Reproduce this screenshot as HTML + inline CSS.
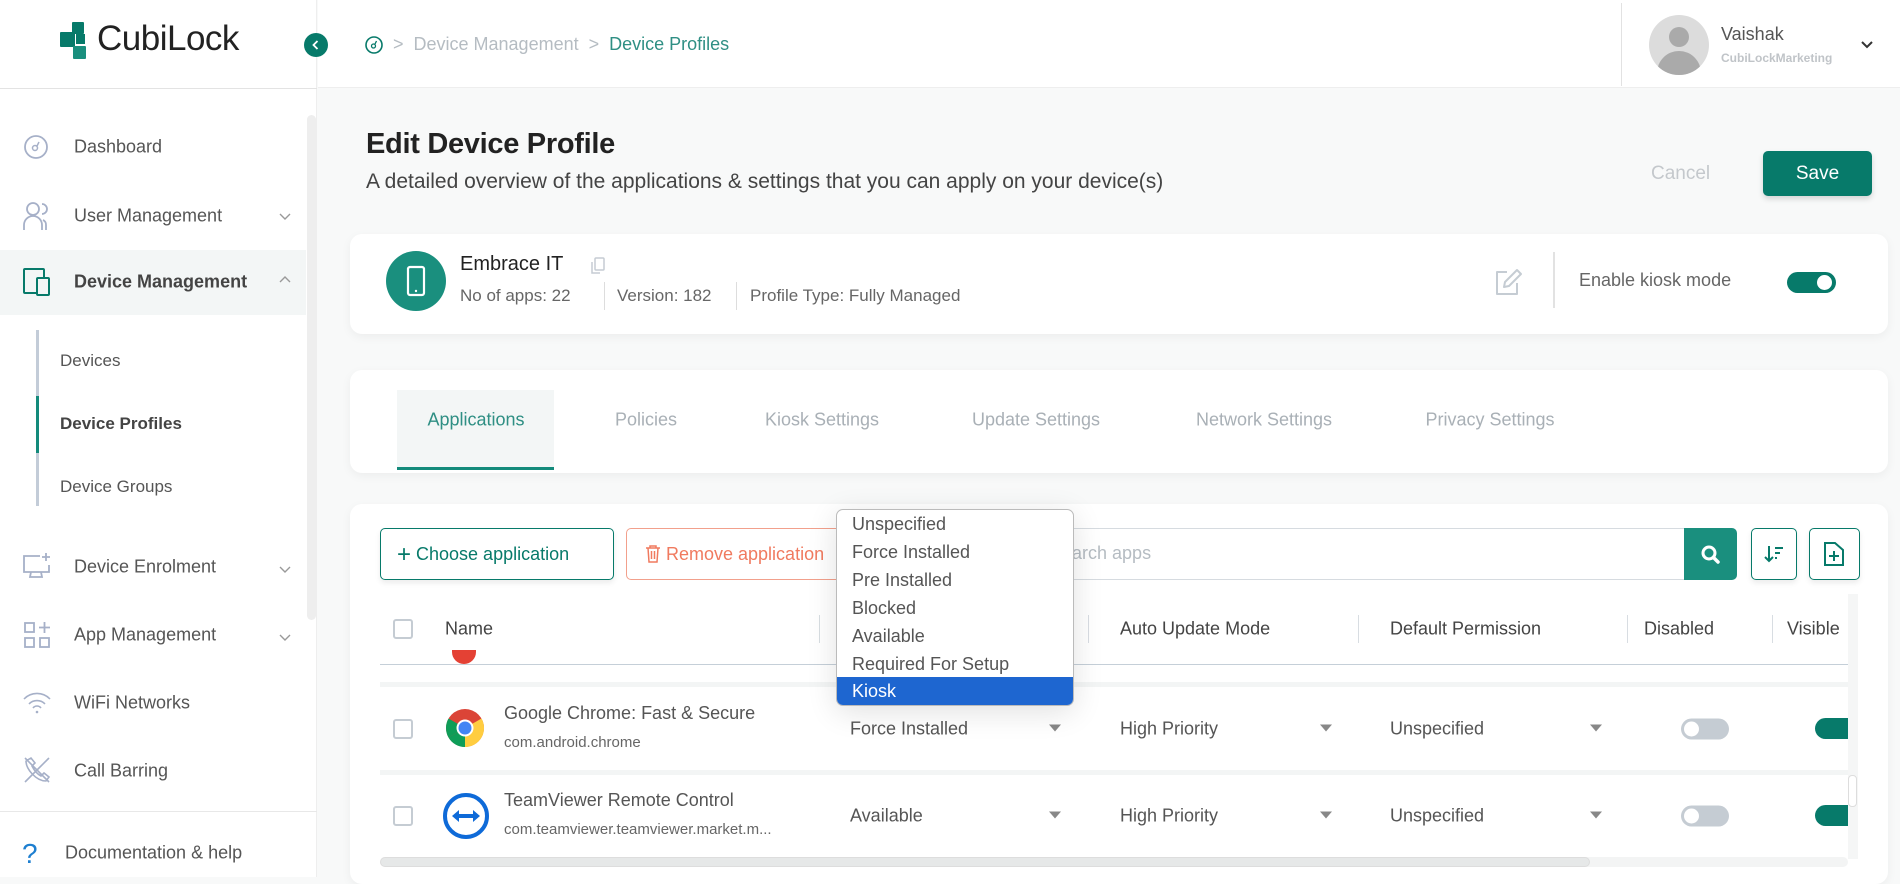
<!DOCTYPE html>
<html><head><meta charset="utf-8"><style>
*{box-sizing:border-box;margin:0;padding:0}
body{width:1900px;height:877px;overflow:hidden;background:#f8f9f9;font-family:"Liberation Sans",sans-serif;color:#555;position:relative}
.a{position:absolute;white-space:nowrap}
.card{position:absolute;background:#fff;border-radius:12px;box-shadow:0 3px 10px rgba(0,0,0,.05)}
.nav{position:absolute;left:74px;font-size:18px;color:#555;transform:translateY(-50%)}
.ic{position:absolute;transform:translate(-50%,-50%)}
.chev{position:absolute;left:278px;transform:translateY(-50%)}
.hd{position:absolute;top:629px;transform:translateY(-50%);font-size:18px;color:#444}
.sep{position:absolute;top:615px;width:1px;height:28px;background:#d8dde2}
.cell{position:absolute;font-size:18px;color:#555;transform:translateY(-50%)}
.caret{position:absolute;width:0;height:0;border-left:6px solid transparent;border-right:6px solid transparent;border-top:7px solid #888;transform:translateY(-50%)}
.tog{position:absolute;width:48px;height:21px;border-radius:11px;transform:translateY(-50%)}
.cb{position:absolute;width:20px;height:20px;border:2px solid #c5ccd3;border-radius:3px;transform:translateY(-50%)}
.dd{position:absolute;left:0;width:100%;height:28px;line-height:28px;padding-left:15px;font-size:18px;color:#555}
.tab{position:absolute;top:420px;font-size:18px;color:#a9b0b6;transform:translate(-50%,-50%)}
</style></head><body>
<!-- sidebar -->
<div class="a" style="left:0;top:0;width:317px;height:877px;background:#fff;border-right:1px solid #eee"></div>
<div class="a" style="left:0;top:88px;width:317px;height:1px;background:#e3e3e3"></div>
<svg class="a" style="left:59px;top:20px" width="34" height="40" viewBox="0 0 34 40"><rect x="1" y="12" width="15" height="15" rx="1" fill="#077a6a"/><rect x="13" y="2" width="12" height="12" rx="1" fill="#077a6a"/><rect x="17" y="14" width="9" height="10" fill="#077a6a"/><rect x="14" y="26" width="13" height="13" rx="1" fill="#1a8f7e"/></svg>
<div class="a" style="left:97px;top:19px;font-size:35px;color:#222;letter-spacing:-0.5px">Cubi<span style="font-weight:300">Lock</span></div>
<div class="a" style="left:307px;top:115px;width:9px;height:505px;background:#eee;border-radius:5px"></div>

<svg class="ic" style="left:36px;top:147px" width="26" height="26" viewBox="0 0 26 26"><circle cx="13" cy="13" r="11" stroke="#a6b0c8" stroke-width="1.8" fill="none"/><circle cx="12" cy="14" r="2.5" stroke="#a6b0c8" stroke-width="1.5" fill="none"/><path d="M14 12 L16 8" stroke="#a6b0c8" stroke-width="1.5"/></svg>
<div class="nav" style="top:147px">Dashboard</div>
<svg class="ic" style="left:37px;top:216px" width="28" height="30" viewBox="0 0 28 30"><circle cx="10" cy="8" r="6" stroke="#a6b0c8" stroke-width="1.8" fill="none"/><path d="M1 29 v-5 a8 8 0 0 1 18 0 v5 M19 3 a5 5 0 0 1 0 10 M23 29 v-5 a5 5 0 0 0 -3 -5" stroke="#a6b0c8" stroke-width="1.8" fill="none"/></svg>
<div class="nav" style="top:216px">User Management</div>
<svg class="chev" style="top:216px" width="14" height="10" viewBox="0 0 14 10"><path d="M2 3 L7 8 L12 3" stroke="#999" stroke-width="1.4" fill="none"/></svg>
<div class="a" style="left:0;top:250px;width:306px;height:65px;background:#f3f6f6"></div>
<svg class="ic" style="left:37px;top:282px" width="30" height="30" viewBox="0 0 30 30"><rect x="2" y="2" width="20" height="24" rx="1" stroke="#077a6a" stroke-width="2" fill="none"/><rect x="15" y="11" width="12" height="17" rx="1" stroke="#077a6a" stroke-width="2" fill="#f3f6f6"/></svg>
<div class="nav" style="top:282px;font-weight:bold;color:#444">Device Management</div>
<svg class="chev" style="top:280px" width="14" height="10" viewBox="0 0 14 10"><path d="M2 7 L7 2 L12 7" stroke="#999" stroke-width="1.4" fill="none"/></svg>
<div class="a" style="left:36px;top:330px;width:3px;height:176px;background:#c3ccd8"></div>
<div class="a" style="left:36px;top:396px;width:3px;height:57px;background:#138a7b"></div>
<div class="nav" style="left:60px;top:361px;font-size:17px">Devices</div>
<div class="nav" style="left:60px;top:424px;font-size:17px;font-weight:bold;color:#444">Device Profiles</div>
<div class="nav" style="left:60px;top:487px;font-size:17px">Device Groups</div>
<svg class="ic" style="left:37px;top:566px" width="30" height="26" viewBox="0 0 30 26"><path d="M18 3 H2 V19 H27 V12 M9 19 L8 24 H20 L19 19 M24 0 V8 M20 4 H28" stroke="#a6b0c8" stroke-width="1.8" fill="none"/></svg>
<div class="nav" style="top:567px">Device Enrolment</div>
<svg class="chev" style="top:569px" width="14" height="10" viewBox="0 0 14 10"><path d="M2 3 L7 8 L12 3" stroke="#999" stroke-width="1.4" fill="none"/></svg>
<svg class="ic" style="left:37px;top:635px" width="28" height="28" viewBox="0 0 28 28"><rect x="2" y="2" width="9" height="9" stroke="#a6b0c8" stroke-width="1.8" fill="none"/><rect x="2" y="17" width="9" height="9" stroke="#a6b0c8" stroke-width="1.8" fill="none"/><rect x="17" y="17" width="9" height="9" stroke="#a6b0c8" stroke-width="1.8" fill="none"/><path d="M21.5 1 V12 M16 6.5 H27" stroke="#a6b0c8" stroke-width="1.8"/></svg>
<div class="nav" style="top:635px">App Management</div>
<svg class="chev" style="top:637px" width="14" height="10" viewBox="0 0 14 10"><path d="M2 3 L7 8 L12 3" stroke="#999" stroke-width="1.4" fill="none"/></svg>
<svg class="ic" style="left:37px;top:703px" width="30" height="22" viewBox="0 0 30 22"><path d="M2 7 a18 18 0 0 1 26 0 M7 12 a11 11 0 0 1 16 0 M11 16 a5 5 0 0 1 8 0" stroke="#a6b0c8" stroke-width="1.6" fill="none"/><circle cx="15" cy="20" r="1.3" fill="#a6b0c8"/></svg>
<div class="nav" style="top:703px">WiFi Networks</div>
<svg class="ic" style="left:37px;top:770px" width="30" height="30" viewBox="0 0 30 30"><path d="M3 3 L27 27 M4 6 c0 8 10 20 20 20 l3 -4 -5 -4 -3 3 c-4 -2 -7 -6 -9 -10 l3 -3 -4 -5 z" stroke="#a6b0c8" stroke-width="1.6" fill="none"/><path d="M27 3 L3 27" stroke="#a6b0c8" stroke-width="1.6"/></svg>
<div class="nav" style="top:771px">Call Barring</div>
<div class="a" style="left:0;top:811px;width:317px;height:1px;background:#e8e8e8"></div>
<div class="a" style="left:22px;top:838px;font-size:28px;color:#1e7fd0">?</div>
<div class="nav" style="left:65px;top:853px">Documentation &amp; help</div>

<!-- header -->
<div class="a" style="left:318px;top:0;width:1582px;height:88px;background:#fff;border-bottom:1px solid #eee"></div>
<div class="a" style="left:304px;top:33px;width:24px;height:24px;border-radius:50%;background:#077a6a"></div>
<svg class="a" style="left:310px;top:39px" width="12" height="12" viewBox="0 0 12 12"><path d="M7.5 2 L3.5 6 L7.5 10" stroke="#fff" stroke-width="1.8" fill="none"/></svg>
<svg class="ic" style="left:374px;top:45px" width="20" height="20" viewBox="0 0 20 20"><circle cx="10" cy="10" r="8" stroke="#077a6a" stroke-width="1.6" fill="none"/><circle cx="9.5" cy="11" r="2" stroke="#077a6a" stroke-width="1.3" fill="none"/><path d="M11 9 L12.5 6" stroke="#077a6a" stroke-width="1.3"/></svg>
<div class="a" style="left:393px;top:34px;font-size:18px;color:#b5bcc2">&gt;&nbsp; Device Management &nbsp;&gt;&nbsp; <span style="color:#2f8f84">Device Profiles</span></div>
<div class="a" style="left:1621px;top:3px;width:1px;height:83px;background:#e2e2e2"></div>
<div class="a" style="left:1649px;top:15px;width:60px;height:60px;border-radius:50%;background:#dcdcdc;overflow:hidden"><div class="a" style="left:20px;top:12px;width:20px;height:20px;border-radius:50%;background:#aaa"></div><div class="a" style="left:8px;top:36px;width:44px;height:30px;border-radius:22px 22px 0 0;background:#aaa"></div></div>
<div class="a" style="left:1721px;top:24px;font-size:18px;color:#555">Vaishak</div>
<div class="a" style="left:1721px;top:51px;font-size:12px;color:#c0c4c8;font-weight:bold">CubiLockMarketing</div>
<svg class="a" style="left:1860px;top:40px" width="14" height="10" viewBox="0 0 14 10"><path d="M2 2 L7 7 L12 2" stroke="#333" stroke-width="2" fill="none"/></svg>

<!-- title -->
<div class="a" style="left:366px;top:128px;font-size:29px;color:#222;font-weight:bold;letter-spacing:-0.3px">Edit Device Profile</div>
<div class="a" style="left:366px;top:170px;font-size:21px;color:#444">A detailed overview of the applications &amp; settings that you can apply on your device(s)</div>
<div class="a" style="left:1651px;top:163px;font-size:19px;color:#c4c8cc">Cancel</div>
<div class="a" style="left:1763px;top:151px;width:109px;height:45px;background:#077a6a;border-radius:5px;color:#fff;font-size:19px;text-align:center;line-height:45px;box-shadow:0 3px 6px rgba(0,0,0,.15)">Save</div>

<!-- card 1 -->
<div class="card" style="left:350px;top:234px;width:1538px;height:100px"></div>
<div class="a" style="left:386px;top:251px;width:60px;height:60px;border-radius:50%;background:#1a8f7e"></div>
<svg class="a" style="left:405px;top:265px" width="22" height="32" viewBox="0 0 22 32"><rect x="3" y="2" width="16" height="28" rx="2" stroke="#fff" stroke-width="2.2" fill="none"/><circle cx="11" cy="26" r="1.2" fill="#fff"/></svg>
<div class="a" style="left:460px;top:253px;font-size:20px;color:#222">Embrace IT</div>
<svg class="a" style="left:589px;top:256px" width="18" height="20" viewBox="0 0 18 20"><rect x="6" y="2" width="9" height="12" rx="1" stroke="#c5ccd3" stroke-width="1.5" fill="none"/><path d="M3 6 V17 H11" stroke="#c5ccd3" stroke-width="1.5" fill="none"/></svg>
<div class="a" style="left:460px;top:286px;font-size:17px;color:#666">No of apps: 22</div>
<div class="a" style="left:604px;top:282px;width:1px;height:28px;background:#ddd"></div>
<div class="a" style="left:617px;top:286px;font-size:17px;color:#666">Version: 182</div>
<div class="a" style="left:736px;top:282px;width:1px;height:28px;background:#ddd"></div>
<div class="a" style="left:750px;top:286px;font-size:17px;color:#666">Profile Type: Fully Managed</div>
<svg class="a" style="left:1493px;top:267px" width="30" height="30" viewBox="0 0 30 30"><path d="M14 5 H4 V27 H24 V16" stroke="#c5ccd3" stroke-width="2" fill="none" stroke-linejoin="round"/><path d="M11 20 L12 15 L24 3 L28 7 L16 19 Z" stroke="#c5ccd3" stroke-width="2" fill="none" stroke-linejoin="round"/></svg>
<div class="a" style="left:1553px;top:252px;width:2px;height:56px;background:#e2e2e2"></div>
<div class="a" style="left:1579px;top:270px;font-size:18px;color:#666">Enable kiosk mode</div>
<div class="a" style="left:1787px;top:272px;width:49px;height:21px;border-radius:11px;background:#077a6a"><div class="a" style="left:30px;top:3px;width:15px;height:15px;border-radius:50%;background:#fff"></div></div>

<!-- card 2 tabs -->
<div class="card" style="left:350px;top:370px;width:1538px;height:103px"></div>
<div class="a" style="left:397px;top:390px;width:157px;height:80px;background:#f3f6f6;border-bottom:3px solid #138a7b"></div>
<div class="tab" style="left:476px;color:#2f8f84">Applications</div>
<div class="tab" style="left:646px">Policies</div>
<div class="tab" style="left:822px">Kiosk Settings</div>
<div class="tab" style="left:1036px">Update Settings</div>
<div class="tab" style="left:1264px">Network Settings</div>
<div class="tab" style="left:1490px">Privacy Settings</div>

<!-- card 3 -->
<div class="card" style="left:350px;top:504px;width:1538px;height:380px"></div>
<div class="a" style="left:380px;top:528px;width:234px;height:52px;border:1.5px solid #077a6a;border-radius:5px;color:#077a6a;font-size:18px;line-height:50px;padding-left:16px;box-shadow:0 3px 6px rgba(0,0,0,.08)"><span style="font-size:24px;vertical-align:-2px">+</span> Choose application</div>
<div class="a" style="left:626px;top:528px;width:240px;height:52px;border:1.5px solid #f2a08c;border-radius:5px;color:#f07a5f;font-size:18px;line-height:50px;padding-left:18px;overflow:hidden">
<svg style="vertical-align:-3px" width="16" height="19" viewBox="0 0 16 19"><path d="M1 4 H15 M5 4 V2 H11 V4 M3 4 L4 18 H12 L13 4 M6.5 7 V15 M9.5 7 V15" stroke="#f07a5f" stroke-width="1.5" fill="none"/></svg> Remove application</div>
<div class="a" style="left:880px;top:528px;width:806px;height:52px;border:1.5px solid #d6dbe0;border-right:none;border-radius:5px 0 0 5px"></div>
<div class="a" style="left:1050px;top:543px;font-size:18px;color:#b5bcc2">Search apps</div>
<div class="a" style="left:1684px;top:528px;width:53px;height:52px;background:#1a8f7e;border-radius:0 5px 5px 0"></div>
<svg class="a" style="left:1700px;top:544px" width="22" height="22" viewBox="0 0 22 22"><circle cx="9" cy="9" r="6" stroke="#fff" stroke-width="3" fill="none"/><path d="M13.5 13.5 L18 18" stroke="#fff" stroke-width="3.5" stroke-linecap="round"/></svg>
<div class="a" style="left:1751px;top:528px;width:46px;height:52px;border:1.5px solid #077a6a;border-radius:5px;box-shadow:0 3px 6px rgba(0,0,0,.08)"></div>
<svg class="a" style="left:1763px;top:543px" width="22" height="22" viewBox="0 0 22 22"><path d="M6 3 V18 M2 14 L6 18 L10 14 M12 5 H20 M12 10 H17 M12 15 H14" stroke="#077a6a" stroke-width="2" fill="none"/></svg>
<div class="a" style="left:1809px;top:528px;width:51px;height:52px;border:1.5px solid #077a6a;border-radius:5px;box-shadow:0 3px 6px rgba(0,0,0,.08)"></div>
<svg class="a" style="left:1822px;top:541px" width="24" height="26" viewBox="0 0 24 26"><path d="M3 2 H13 L21 9 V24 H3 Z" stroke="#077a6a" stroke-width="2" fill="none"/><path d="M12 10 V20 M7 15 H17" stroke="#077a6a" stroke-width="2"/></svg>

<!-- table -->
<div class="cb" style="left:393px;top:629px"></div>
<div class="hd" style="left:445px">Name</div>
<div class="sep" style="left:819px"></div>
<div class="sep" style="left:1088px"></div>
<div class="hd" style="left:1120px">Auto Update Mode</div>
<div class="sep" style="left:1358px"></div>
<div class="hd" style="left:1390px">Default Permission</div>
<div class="sep" style="left:1627px"></div>
<div class="hd" style="left:1644px">Disabled</div>
<div class="sep" style="left:1772px"></div>
<div class="hd" style="left:1787px;width:61px;overflow:hidden">Visible</div>
<div class="a" style="left:380px;top:664px;width:1468px;height:1px;background:#c5cfd8"></div>
<div class="a" style="left:452px;top:650px;width:24px;height:14px;border-radius:0 0 12px 12px;background:#e44134"></div>
<div class="a" style="left:380px;top:682px;width:1468px;height:5px;background:#f3f5f5"></div>
<div class="a" style="left:380px;top:770px;width:1468px;height:5px;background:#f3f5f5"></div>

<div class="cb" style="left:393px;top:729px"></div>
<svg class="a" style="left:443px;top:706px" width="44" height="44" viewBox="0 0 44 44"><circle cx="22" cy="22" r="21" fill="#fff"/><circle cx="22" cy="22" r="19" fill="#db4437"/><path d="M22 22 L5.5 31.5 A19 19 0 0 1 3 22 A19 19 0 0 1 5.5 12.5 Z" fill="#0f9d58"/><path d="M22 22 L5.5 31.5 A19 19 0 0 0 22 41 Z" fill="#0f9d58"/><path d="M22 22 L38.5 12.5 A19 19 0 0 1 22 41 Z" fill="#ffcd40"/><circle cx="22" cy="22" r="8.5" fill="#fff"/><circle cx="22" cy="22" r="6.5" fill="#4285f4"/></svg>
<div class="a" style="left:504px;top:703px;font-size:18px;color:#555">Google Chrome: Fast &amp; Secure</div>
<div class="a" style="left:504px;top:734px;font-size:15px;color:#666">com.android.chrome</div>
<div class="cell" style="left:850px;top:729px">Force Installed</div>
<div class="caret" style="left:1049px;top:728px"></div>
<div class="cell" style="left:1120px;top:729px">High Priority</div>
<div class="caret" style="left:1320px;top:728px"></div>
<div class="cell" style="left:1390px;top:729px">Unspecified</div>
<div class="caret" style="left:1590px;top:728px"></div>
<div class="tog" style="left:1681px;top:729px;background:#c5ccd3"><div class="a" style="left:3px;top:3px;width:15px;height:15px;border-radius:50%;background:#fff"></div></div>
<div class="a" style="left:1815px;top:718px;width:33px;height:21px;border-radius:11px 0 0 11px;background:#077a6a"></div>

<div class="cb" style="left:393px;top:816px"></div>
<svg class="a" style="left:443px;top:793px" width="46" height="46" viewBox="0 0 46 46"><circle cx="23" cy="23" r="21" fill="#fff" stroke="#0e6ad8" stroke-width="4"/><path d="M9 23 L16 17 V21 H30 V17 L37 23 L30 29 V25 H16 V29 Z" fill="#0e6ad8"/></svg>
<div class="a" style="left:504px;top:790px;font-size:18px;color:#555">TeamViewer Remote Control</div>
<div class="a" style="left:504px;top:821px;font-size:15px;color:#666">com.teamviewer.teamviewer.market.m...</div>
<div class="cell" style="left:850px;top:816px">Available</div>
<div class="caret" style="left:1049px;top:815px"></div>
<div class="cell" style="left:1120px;top:816px">High Priority</div>
<div class="caret" style="left:1320px;top:815px"></div>
<div class="cell" style="left:1390px;top:816px">Unspecified</div>
<div class="caret" style="left:1590px;top:815px"></div>
<div class="tog" style="left:1681px;top:816px;background:#c5ccd3"><div class="a" style="left:3px;top:3px;width:15px;height:15px;border-radius:50%;background:#fff"></div></div>
<div class="a" style="left:1815px;top:805px;width:33px;height:21px;border-radius:11px 0 0 11px;background:#077a6a"></div>

<div class="a" style="left:1848px;top:594px;width:10px;height:265px;background:#f5f6f6"></div>
<div class="a" style="left:1848px;top:775px;width:9px;height:32px;background:#fff;border:1px solid #ddd;border-radius:4px"></div>
<div class="a" style="left:380px;top:857px;width:1468px;height:10px;background:#f3f4f4;border-radius:5px"></div>
<div class="a" style="left:380px;top:857px;width:1210px;height:10px;background:#e6e8e8;border-radius:5px;border:1px solid #ddd"></div>

<!-- dropdown -->
<div class="a" style="left:836px;top:509px;width:238px;height:197px;background:#fff;border:1px solid #bbb;border-radius:7px;box-shadow:0 6px 30px rgba(0,0,0,.12);overflow:hidden">
<div class="dd" style="top:0px">Unspecified</div>
<div class="dd" style="top:28px">Force Installed</div>
<div class="dd" style="top:56px">Pre Installed</div>
<div class="dd" style="top:84px">Blocked</div>
<div class="dd" style="top:112px">Available</div>
<div class="dd" style="top:140px">Required For Setup</div>
<div class="dd" style="top:167px;background:#1e66d0;color:#fff">Kiosk</div>
</div>
</body></html>
